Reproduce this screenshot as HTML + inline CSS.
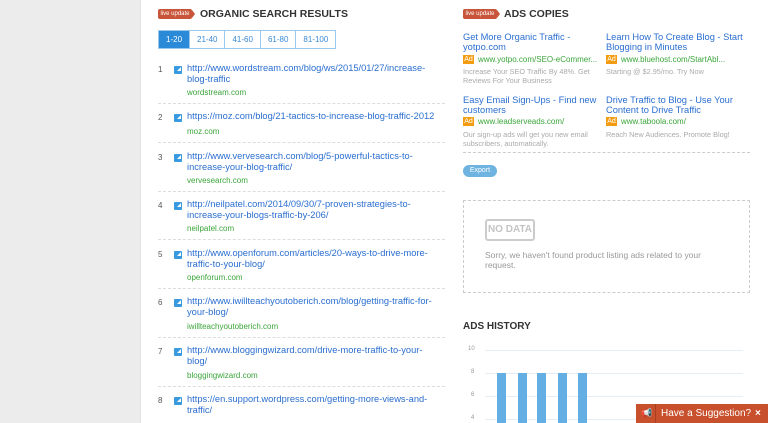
<!DOCTYPE html>
<html><head><meta charset="utf-8"><style>
*{margin:0;padding:0;box-sizing:border-box}
body{width:768px;height:423px;overflow:hidden;background:#fff;font-family:"Liberation Sans",sans-serif;position:relative}
.side{position:absolute;left:0;top:0;width:141px;height:423px;background:#ececec;border-right:1px solid #e0e0e0}
.a{position:absolute;white-space:nowrap}
.lu{position:absolute;background:#c8553a;color:#fff;font-size:6px;height:10px;line-height:10px;padding:0 2px;border-radius:2px;width:34px;text-align:center;overflow:visible}
.lu:after{content:"";position:absolute;right:-3px;top:1px;border-left:3px solid #c8553a;border-top:4px solid transparent;border-bottom:4px solid transparent}
.h{font-size:10.5px;font-weight:bold;color:#333}
.tabs{position:absolute;left:158px;top:30px;display:flex;border:1px solid #9cc8ec}
.tabs div{font-size:8px;color:#3a8ad6;height:17px;line-height:17px;padding:0 7px;border-left:1px solid #9cc8ec}
.tabs div:first-child{border-left:none;background:#2b8ad8;color:#fff}
.n{font-size:8px;color:#555}
.ic{position:absolute;width:8px;height:8px;background:#3a9ae0;border-radius:1px}
.ic:after{content:"";position:absolute;left:3px;top:1px;width:4px;height:4px;background:#fff;clip-path:polygon(0 100%,100% 0,100% 100%)}
.l{font-size:9.3px;color:#2a6ed0;line-height:10.5px}
.d{font-size:8px;color:#3ba53b}
.sep{position:absolute;left:158px;width:287px;border-top:1px dashed #ddd}
.t{font-size:9.3px;color:#2a6ed0;line-height:10px}
.ad{position:absolute;background:#f39c12;color:#fff;font-size:7px;width:11px;height:9px;line-height:9px;text-align:center}
.u{font-size:8px;color:#3ba53b}
.ds{font-size:7.3px;color:#aaa;line-height:9px}
.gl{position:absolute;left:485px;width:258px;border-top:1px solid #e4eef4}
.yl{position:absolute;left:468px;font-size:6px;color:#999}
.bar{position:absolute;top:373px;width:9px;height:50px;background:#63aee2}
</style></head><body>
<div class="side"></div>

<div class="lu" style="left:158px;top:9px">live update</div>
<div class="a h" style="left:200px;top:8px">ORGANIC SEARCH RESULTS</div>
<div class="tabs"><div>1-20</div><div>21-40</div><div>41-60</div><div>61-80</div><div>81-100</div></div>

<div class="a n" style="left:158px;top:65px">1</div><div class="ic" style="left:174px;top:66px"></div>
<div class="a l" style="left:187px;top:63px">http://www.wordstream.com/blog/ws/2015/01/27/increase-<br>blog-traffic</div>
<div class="a d" style="left:187px;top:88px">wordstream.com</div>
<div class="sep" style="top:103px"></div>

<div class="a n" style="left:158px;top:113px">2</div><div class="ic" style="left:174px;top:114px"></div>
<div class="a l" style="left:187px;top:111px">https://moz.com/blog/21-tactics-to-increase-blog-traffic-2012</div>
<div class="a d" style="left:187px;top:127px">moz.com</div>
<div class="sep" style="top:142px"></div>

<div class="a n" style="left:158px;top:153px">3</div><div class="ic" style="left:174px;top:154px"></div>
<div class="a l" style="left:187px;top:151px">http://www.vervesearch.com/blog/5-powerful-tactics-to-<br>increase-your-blog-traffic/</div>
<div class="a d" style="left:187px;top:176px">vervesearch.com</div>
<div class="sep" style="top:191px"></div>

<div class="a n" style="left:158px;top:201px">4</div><div class="ic" style="left:174px;top:202px"></div>
<div class="a l" style="left:187px;top:199px">http://neilpatel.com/2014/09/30/7-proven-strategies-to-<br>increase-your-blogs-traffic-by-206/</div>
<div class="a d" style="left:187px;top:224px">neilpatel.com</div>
<div class="sep" style="top:239px"></div>

<div class="a n" style="left:158px;top:250px">5</div><div class="ic" style="left:174px;top:251px"></div>
<div class="a l" style="left:187px;top:248px">http://www.openforum.com/articles/20-ways-to-drive-more-<br>traffic-to-your-blog/</div>
<div class="a d" style="left:187px;top:273px">openforum.com</div>
<div class="sep" style="top:288px"></div>

<div class="a n" style="left:158px;top:298px">6</div><div class="ic" style="left:174px;top:299px"></div>
<div class="a l" style="left:187px;top:296px">http://www.iwillteachyoutoberich.com/blog/getting-traffic-for-<br>your-blog/</div>
<div class="a d" style="left:187px;top:322px">iwillteachyoutoberich.com</div>
<div class="sep" style="top:337px"></div>

<div class="a n" style="left:158px;top:347px">7</div><div class="ic" style="left:174px;top:348px"></div>
<div class="a l" style="left:187px;top:345px">http://www.bloggingwizard.com/drive-more-traffic-to-your-<br>blog/</div>
<div class="a d" style="left:187px;top:371px">bloggingwizard.com</div>
<div class="sep" style="top:386px"></div>

<div class="a n" style="left:158px;top:396px">8</div><div class="ic" style="left:174px;top:397px"></div>
<div class="a l" style="left:187px;top:394px">https://en.support.wordpress.com/getting-more-views-and-<br>traffic/</div>

<div class="lu" style="left:463px;top:9px">live update</div>
<div class="a h" style="left:504px;top:8px">ADS COPIES</div>

<div class="a t" style="left:463px;top:32px">Get More Organic Traffic -<br>yotpo.com</div>
<div class="ad" style="left:463px;top:55px">Ad</div><div class="a u" style="left:478px;top:55px">www.yotpo.com/SEO-eCommer...</div>
<div class="a ds" style="left:463px;top:67px">Increase Your SEO Traffic By 48%. Get<br>Reviews For Your Business</div>

<div class="a t" style="left:606px;top:32px">Learn How To Create Blog - Start<br>Blogging in Minutes</div>
<div class="ad" style="left:606px;top:55px">Ad</div><div class="a u" style="left:621px;top:55px">www.bluehost.com/StartAbl...</div>
<div class="a ds" style="left:606px;top:67px">Starting @ $2.95/mo. Try Now</div>

<div class="a t" style="left:463px;top:95px">Easy Email Sign-Ups - Find new<br>customers</div>
<div class="ad" style="left:463px;top:117px">Ad</div><div class="a u" style="left:478px;top:117px">www.leadserveads.com/</div>
<div class="a ds" style="left:463px;top:130px">Our sign-up ads will get you new email<br>subscribers, automatically.</div>

<div class="a t" style="left:606px;top:95px">Drive Traffic to Blog - Use Your<br>Content to Drive Traffic</div>
<div class="ad" style="left:606px;top:117px">Ad</div><div class="a u" style="left:621px;top:117px">www.taboola.com/</div>
<div class="a ds" style="left:606px;top:130px">Reach New Audiences. Promote Blog!</div>

<div style="position:absolute;left:463px;top:152px;width:287px;border-top:1px dashed #ccc"></div>
<div class="a" style="left:463px;top:165px;width:34px;height:12px;border-radius:6px;background:#6fb3e0;color:#fff;font-size:7px;line-height:12px;text-align:center">Export</div>

<div style="position:absolute;left:463px;top:200px;width:287px;height:93px;border:1px dashed #ccc"></div>
<div class="a" style="left:485px;top:219px;width:50px;height:22px;border:2px solid #ccc;border-radius:3px;color:#c4c4c4;font-size:10px;font-weight:bold;line-height:18px;text-align:center">NO DATA</div>
<div class="a" style="left:485px;top:250px;font-size:8.5px;color:#999;line-height:10px">Sorry, we haven't found product listing ads related to your<br>request.</div>

<div class="a h" style="left:463px;top:321px;font-size:10px">ADS HISTORY</div>
<div class="yl" style="top:346px">10</div><div class="gl" style="top:350px"></div>
<div class="yl" style="top:369px;left:471px">8</div><div class="gl" style="top:373px"></div>
<div class="yl" style="top:392px;left:471px">6</div><div class="gl" style="top:396px"></div>
<div class="yl" style="top:415px;left:471px">4</div><div class="gl" style="top:419px"></div>
<div class="bar" style="left:497px"></div><div class="bar" style="left:518px"></div><div class="bar" style="left:537px"></div><div class="bar" style="left:558px"></div><div class="bar" style="left:578px"></div>

<div class="a" style="left:636px;top:404px;width:132px;height:19px;background:#c8502d;color:#fff;font-size:10px;line-height:19px">
<span style="position:absolute;left:5px;top:0;font-size:9px">&#128226;</span>
<span style="position:absolute;left:19px;top:0;width:1px;height:19px;background:#a8401f"></span>
<span style="position:absolute;left:25px">Have a Suggestion?</span>
<span style="position:absolute;left:119px;font-weight:bold">×</span></div>
</body></html>
